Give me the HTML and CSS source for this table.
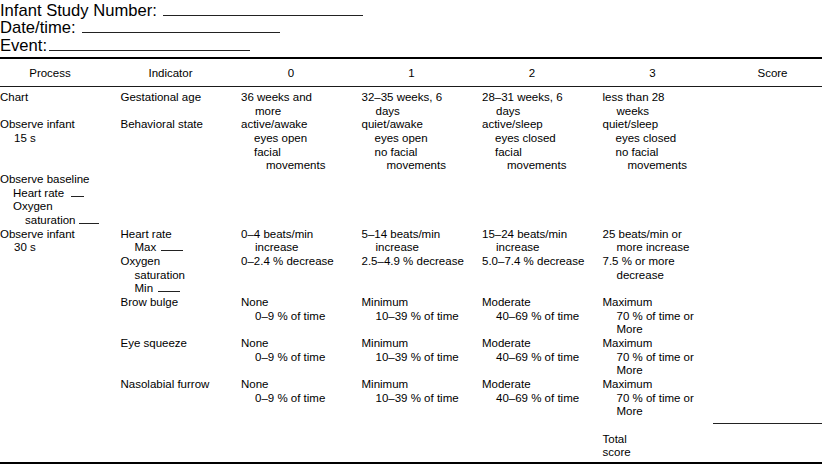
FILE: index.html
```html
<!DOCTYPE html>
<html lang="en">
<head>
<meta charset="utf-8">
<title>Infant pain assessment form</title>
<link rel="stylesheet" href="styles.css">
</head>
<body>
<main class="page">
  <header class="fields">
    <div class="field">Infant Study Number:<span class="blank b1"></span></div>
    <div class="field">Date/time:<span class="blank b2"></span></div>
    <div class="field">Event:<span class="blank b3"></span></div>
  </header>

  <section class="table">
    <div class="grid thead">
      <div class="th">Process</div>
      <div class="th">Indicator</div>
      <div class="th">0</div>
      <div class="th">1</div>
      <div class="th">2</div>
      <div class="th">3</div>
      <div class="th score">Score</div>
    </div>

    <div class="grid tbody">
      <!-- Chart -->
      <div class="cell pc"><p>Chart</p></div>
      <div class="cell ic"><p>Gestational age</p></div>
      <div class="cell c0"><p>36 weeks and<br>more</p></div>
      <div class="cell c1"><p>32–35 weeks, 6<br>days</p></div>
      <div class="cell c2"><p>28–31 weeks, 6<br>days</p></div>
      <div class="cell c3"><p>less than 28<br>weeks</p></div>

      <!-- Observe infant 15 s -->
      <div class="cell pc"><p>Observe infant<br>15 s</p></div>
      <div class="cell ic"><p>Behavioral state</p></div>
      <div class="cell c0"><p>active/awake</p><p class="sub">eyes open</p><p class="sub">facial<br>movements</p></div>
      <div class="cell c1"><p>quiet/awake</p><p class="sub">eyes open</p><p class="sub">no facial<br>movements</p></div>
      <div class="cell c2"><p>active/sleep</p><p class="sub">eyes closed</p><p class="sub">facial<br>movements</p></div>
      <div class="cell c3"><p>quiet/sleep</p><p class="sub">eyes closed</p><p class="sub">no facial<br>movements</p></div>

      <!-- Observe baseline -->
      <div class="cell pc"><p>Observe baseline</p><p class="sub">Heart rate <span class="blank hr"></span></p><p class="sub">Oxygen<br>saturation<span class="blank sat"></span></p></div>

      <!-- Observe infant 30 s -->
      <div class="cell pc span5"><p>Observe infant<br>30 s</p></div>

      <div class="cell ic"><p>Heart rate<br>Max <span class="blank mx"></span></p></div>
      <div class="cell c0"><p>0–4 beats/min<br>increase</p></div>
      <div class="cell c1"><p>5–14 beats/min<br>increase</p></div>
      <div class="cell c2"><p>15–24 beats/min<br>increase</p></div>
      <div class="cell c3"><p>25 beats/min or<br>more increase</p></div>

      <div class="cell ic"><p>Oxygen<br>saturation<br>Min <span class="blank mx"></span></p></div>
      <div class="cell c0"><p>0–2.4 % decrease</p></div>
      <div class="cell c1"><p>2.5–4.9 % decrease</p></div>
      <div class="cell c2"><p>5.0–7.4 % decrease</p></div>
      <div class="cell c3"><p>7.5 % or more<br>decrease</p></div>

      <div class="cell ic"><p>Brow bulge</p></div>
      <div class="cell c0"><p>None<br>0–9 % of time</p></div>
      <div class="cell c1"><p>Minimum<br>10–39 % of time</p></div>
      <div class="cell c2"><p>Moderate<br>40–69 % of time</p></div>
      <div class="cell c3"><p>Maximum<br>70 % of time or<br>More</p></div>

      <div class="cell ic"><p>Eye squeeze</p></div>
      <div class="cell c0"><p>None<br>0–9 % of time</p></div>
      <div class="cell c1"><p>Minimum<br>10–39 % of time</p></div>
      <div class="cell c2"><p>Moderate<br>40–69 % of time</p></div>
      <div class="cell c3"><p>Maximum<br>70 % of time or<br>More</p></div>

      <div class="cell ic"><p>Nasolabial furrow</p></div>
      <div class="cell c0"><p>None<br>0–9 % of time</p></div>
      <div class="cell c1"><p>Minimum<br>10–39 % of time</p></div>
      <div class="cell c2"><p>Moderate<br>40–69 % of time</p></div>
      <div class="cell c3"><p>Maximum<br>70 % of time or<br>More</p></div>

      <!-- Total -->
      <div class="cell sc rule-row"><div class="score-rule"></div></div>
      <div class="cell c3 total-row"><p class="flat">Total<br>score</p></div>
    </div>
  </section>
</main>
</body>
</html>
```

FILE: styles.css
```css
* { box-sizing: border-box; }

html, body {
  margin: 0;
  padding: 0;
  background: #ffffff;
}

body {
  font-family: "Liberation Sans", Arial, Helvetica, sans-serif;
  color: #000000;
}

.page {
  width: 822px;
}

/* ---------- top fields ---------- */
.fields {
  padding-top: 1.5px;
  font-size: 16.6px;
  line-height: 17.5px;
}

.field {
  white-space: nowrap;
}

.blank {
  display: inline-block;
  height: 1px;
  border-bottom: 1px solid #222222;
}

.b1 { width: 200px; margin-left: 6px; }
.b2 { width: 198px; margin-left: 6px; }
.b3 { width: 201px; margin-left: 2px; }

/* ---------- table ---------- */
.table {
  margin-top: 3px;
  border-top: 2px solid #000000;
  border-bottom: 2px solid #000000;
  padding-bottom: 2.25px;
  font-size: 11.5px;
  line-height: 13.65px;
}

.grid {
  display: grid;
  grid-template-columns: repeat(6, 120.5px) 1fr;
}

.thead {
  padding: 8.2px 0 5.15px;
  border-bottom: 1px solid #1a1a1a;
}

.th {
  text-align: center;
  padding-right: 20.5px;
}

.th.score {
  padding-right: 0;
}

.tbody {
  padding-top: 4.2px;
}

.cell p {
  margin: 0;
  padding-left: 14px;
  text-indent: -14px;
  white-space: nowrap;
}

.cell p.sub {
  padding-left: 25px;
  text-indent: -12px;
}

.cell p.flat {
  padding-left: 0;
  text-indent: 0;
}

.pc { grid-column: 1; }
.ic { grid-column: 2; }
.c0 { grid-column: 3; }
.c1 { grid-column: 4; }
.c2 { grid-column: 5; }
.c3 { grid-column: 6; }
.sc { grid-column: 7; }

.span5 { grid-row: span 5; }

.cell .blank { text-indent: 0; }
.hr  { width: 13px; margin-left: 4px; }
.sat { width: 20px; margin-left: 3px; }
.mx  { width: 22px; margin-left: 2px; }

.rule-row {
  grid-row: 9;
  height: 13.65px;
}

.score-rule {
  height: 5px;
  margin-left: -10px;
  border-bottom: 1px solid #222222;
}

.total-row {
  grid-row: 10;
}
```
